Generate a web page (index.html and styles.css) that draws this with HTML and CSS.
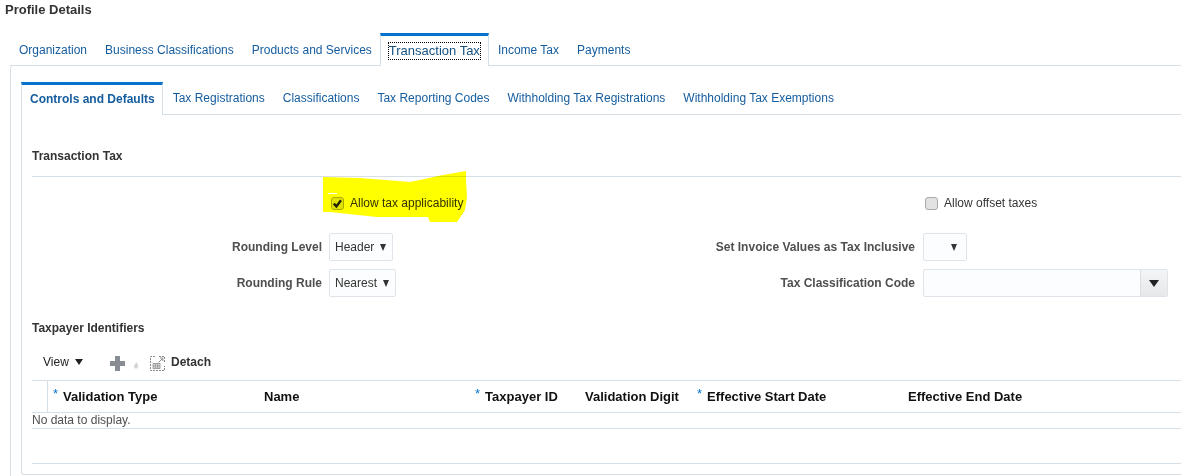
FILE: index.html
```html
<!DOCTYPE html>
<html lang="en">
<head>
<meta charset="utf-8">
<title>Profile Details</title>
<link rel="stylesheet" href="styles.css">
</head>
<body>
<h1 class="page-title">Profile Details</h1>
<nav class="tabs main-tabs">
  <a class="tab">Organization</a>
  <a class="tab">Business Classifications</a>
  <a class="tab">Products and Services</a>
  <a class="tab active first-level"><span class="focus">Transaction Tax</span></a>
  <a class="tab">Income Tax</a>
  <a class="tab">Payments</a>
</nav>
<div class="outer-panel">
  <nav class="tabs sub-tabs">
    <a class="tab active bold">Controls and Defaults</a>
    <a class="tab">Tax Registrations</a>
    <a class="tab">Classifications</a>
    <a class="tab">Tax Reporting Codes</a>
    <a class="tab">Withholding Tax Registrations</a>
    <a class="tab">Withholding Tax Exemptions</a>
  </nav>
  <div class="inner-panel">
    <h2 class="section-title">Transaction Tax</h2>
    <div class="form-grid">
      <span></span>
      <label class="check"><span class="box checked"><svg viewBox="0 0 13 13" width="13" height="13"><path d="M2.800 6.600 5.400 9.400 10 3.200" fill="none" stroke="#222" stroke-width="2.400"/></svg></span>Allow tax applicability</label>
      <span></span>
      <label class="check check-right"><span class="box"></span>Allow offset taxes</label>

      <span class="label">Rounding Level</span>
      <span class="select sel-header">Header<i class="caret"></i></span>
      <span class="label">Set Invoice Values as Tax Inclusive</span>
      <span class="select sel-empty"><i class="caret"></i></span>

      <span class="label">Rounding Rule</span>
      <span class="select sel-nearest">Nearest<i class="caret"></i></span>
      <span class="label">Tax Classification Code</span>
      <span class="combo"><span class="combo-input"></span><span class="combo-btn"><i class="caret big"></i></span></span>
    </div>
    <h2 class="section-title taxpayer">Taxpayer Identifiers</h2>
    <div class="toolbar">
      <span class="view">View<i class="caret big"></i></span>
      <svg class="icon-plus" viewBox="0 0 15 15" width="15" height="15"><path d="M5 0h5v5h5v5h-5v5h-5v-5h-5v-5h5z" fill="#878d92"/></svg>
      <svg class="icon-drop" viewBox="0 0 6 7" width="6" height="7"><path d="M3.500 0 5.500 4.500 3 7 .5 4.500z" fill="#d4d4d4"/></svg>
      <svg class="icon-detach" viewBox="0 0 15 15" width="15" height="15"><path d="M5 .5H.5V14.500H14.500V10M9 .5h5.500V6" fill="none" stroke="#8a8a8a" stroke-dasharray="2 1"/><path d="M8.500 6.500 12.500 2.500M10 2h2.800V5" fill="none" stroke="#8a8a8a"/><path d="M3 7.500h7v5H3zM3 9.200h7M3 10.900h7M5.300 7.500v5M7.700 7.500v5" fill="none" stroke="#8a8a8a" stroke-width=".8"/></svg>
      <span class="detach">Detach</span>
    </div>
    <div class="table-head">
      <span class="col c-gutter"></span>
      <span class="col c-type"><i class="req">*</i>Validation Type</span>
      <span class="col c-name">Name</span>
      <span class="col c-id"><i class="req">*</i>Taxpayer ID</span>
      <span class="col c-digit">Validation Digit</span>
      <span class="col c-start"><i class="req">*</i>Effective Start Date</span>
      <span class="col c-end">Effective End Date</span>
    </div>
    <div class="table-empty">No data to display.</div>
    <div class="table-foot"></div>
  </div>
</div>
<svg class="highlight" viewBox="0 0 150 56" width="150" height="56"><path fill-rule="evenodd" d="M3 7 40 8 90 12 123 5 146 1 146 10 147 27 145 40 137 52 110 52 108 47 57 47 10 42 3 42ZM8 23h9v1H8Z" fill="#ffff00"/></svg>
</body>
</html>
```
FILE: styles.css
```css
* { box-sizing: border-box; }
html, body { margin: 0; padding: 0; }
body {
  position: relative;
  width: 1181px;
  height: 476px;
  overflow: hidden;
  background: #fff;
  font: 12px/16px "Liberation Sans", Arial, sans-serif;
  color: #4f4f4f;
}
.page-title {
  margin: 0;
  padding: 2px 0 0 5px;
  height: 33px;
  font-size: 13px;
  line-height: 16px;
  font-weight: 700;
  color: #333;
}
.tabs { display: flex; border-bottom: 1px solid #d6dfe6; }
.tab {
  display: flex;
  align-items: center;
  padding: 0 9px;
  color: #145c9e;
  white-space: nowrap;
  border-top: 3px solid transparent;
}
.tab.active {
  padding: 0 8px;
  margin-bottom: -1px;
  background: #fff;
  border-top-color: #0572ce;
  border-left: 1px solid #d6dfe6;
  border-right: 1px solid #d6dfe6;
  color: #145c9e;
}
.first-level { margin-left: -1px; font-size: 13px; }
.focus { outline: 1px dotted #000; color: #14507f; }
.main-tabs { height: 33px; margin-left: 10px; }
.main-tabs .tab { padding-bottom: 1px; }
.outer-panel {
  margin-left: 10px;
  padding: 16px 0 0 10px;
  height: 410px;
  border-left: 1px solid #d6dfe6;
  border-top-left-radius: 3px;
}
.sub-tabs { height: 33px; }
.sub-tabs .tab { padding-bottom: 3px; }
.sub-tabs .tab.active { padding-right: 7px; margin-right: 1px; }
.bold { font-weight: 700; }
.inner-panel {
  height: 360px;
  padding: 0 0 0 10px;
  border-left: 1px solid #d6dfe6;
  border-bottom: 1px solid #d6dfe6;
  border-bottom-left-radius: 3px;
}
.section-title {
  margin: 0;
  font-size: 12px;
  line-height: 16px;
  font-weight: 700;
  color: #333;
  padding-top: 33px;
  padding-bottom: 12px;
  border-bottom: 1px solid #d6dfe6;
}
.form-grid {
  display: grid;
  grid-template-columns: 290px 271px 308px 245px;
  grid-template-rows: 37px 28px 28px;
  row-gap: 8px;
  column-gap: 7px;
  margin-top: 11px;
  align-items: center;
}
.label { text-align: right; font-weight: 700; color: #4f4f4f; white-space: nowrap; }
.check { display: flex; align-items: center; align-self: start; height: 30px; color: #333; white-space: nowrap; }
.check-right { margin-left: 1px; }
.box {
  width: 13px;
  height: 13px;
  margin: 0 6px 0 2px;
  border: 1px solid #aaa;
  border-radius: 3px;
  background: #e2e2e2;
  flex: none;
  position: relative;
}
.box svg { position: absolute; left: -1px; top: -1px; }
.select, .combo {
  display: flex;
  align-items: center;
  height: 28px;
  background: #fcfdfe;
  border: 1px solid #dfe4ea;
  border-radius: 2px;
  color: #333;
}
.select { padding-left: 5px; justify-self: start; }
.sel-header { width: 64px; }
.sel-nearest { width: 67px; }
.sel-empty { width: 44px; margin-left: 1px; justify-content: flex-end; padding-right: 9px; }
.caret {
  display: inline-block;
  width: 0;
  height: 0;
  margin-left: 6px;
  border-left: 3.500px solid transparent;
  border-right: 3.500px solid transparent;
  border-top: 7px solid #333;
}
.caret.big { border-left-width: 4.500px; border-right-width: 4.500px; border-top-width: 6px; border-top-color: #222; }
.combo { width: 245px; margin-left: 1px; }
.combo-input { flex: 1; }
.combo-btn {
  width: 27px;
  height: 26px;
  display: flex;
  align-items: center;
  justify-content: center;
  background: linear-gradient(#f4f5f6, #e6e8ea);
  border-left: 1px solid #d6dfe6;
  border-radius: 0 2px 2px 0;
}
.combo-btn .caret { margin: 0; border-left-width: 5.500px; border-right-width: 5.500px; border-top-width: 7px; }
.section-title.taxpayer { padding: 0; border: 0; margin-top: 23px; }
.toolbar {
  display: flex;
  align-items: center;
  height: 36px;
  margin-top: 8px;
  padding-left: 11px;
  color: #222;
}
.view { display: flex; align-items: center; width: 67px; }
.view .caret { margin-left: 6px; }
.icon-plus, .icon-detach { margin-top: 2px; }
.icon-drop { margin: 6px 0 0 8px; }
.icon-detach { margin-left: 11px; }
.detach { margin-left: 6px; font-weight: 700; color: #333; }
.table-head {
  display: flex;
  height: 33px;
  border-top: 1px solid #d6dfe6;
  border-bottom: 1px solid #d6dfe6;
  color: #111;
  font-weight: 700;
}
.col { display: flex; align-items: center; white-space: nowrap; font-size: 13px; }
.c-gutter { width: 16px; border-right: 1px solid #d6dfe6; }
.c-type { width: 216px; padding-left: 5px; }
.c-name { width: 211px; }
.c-id { width: 110px; }
.c-digit { width: 112px; }
.c-start { width: 211px; }
.req { font-style: normal; font-weight: 400; color: #0572ce; margin-right: 5px; position: relative; top: -3px; font-size: 13px; }
.table-empty {
  height: 16px;
  line-height: 15px;
  color: #4f4f4f;
  border-bottom: 1px solid #d6dfe6;
}
.table-foot { height: 35px; border-bottom: 1px solid #d6dfe6; }
.highlight {
  position: absolute;
  left: 320px;
  top: 170px;
  mix-blend-mode: multiply;
  pointer-events: none;
}
```
